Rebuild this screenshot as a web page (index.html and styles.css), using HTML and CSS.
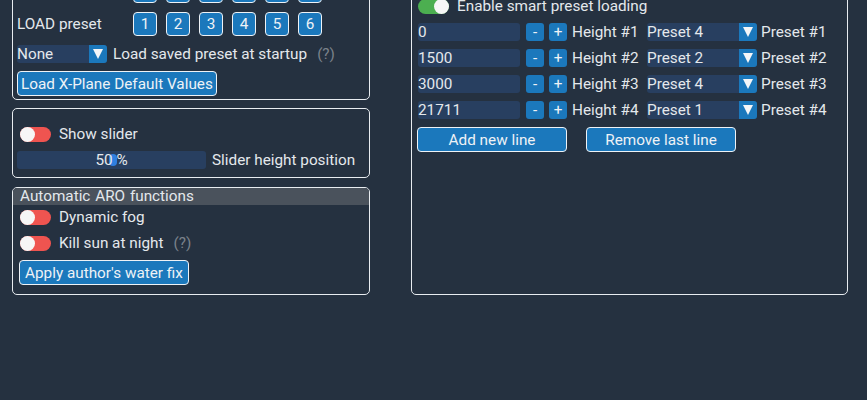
FILE: index.html
```html
<html>
<head>
<title>ARO Presets</title>
<link rel="stylesheet" href="styles.css">
</head>
<body>

<div class="screen">
  <div class="col-left">

    <div class="box presets">
      <div class="row slot-row">
        <span class="label"></span>
        <div class="slots">
          <button class="slot"></button><button class="slot"></button><button class="slot"></button>
          <button class="slot"></button><button class="slot"></button><button class="slot"></button>
        </div>
      </div>
      <div class="row slot-row">
        <span class="label">LOAD preset</span>
        <div class="slots">
          <button class="slot">1</button><button class="slot">2</button><button class="slot">3</button>
          <button class="slot">4</button><button class="slot">5</button><button class="slot">6</button>
        </div>
      </div>
      <div class="row line">
        <div class="combo combo-none"><span class="combo-text">None</span><span class="arrow"></span></div>
        <span>Load saved preset at startup</span>
        <span class="hint">(?)</span>
      </div>
      <div class="row btn-row">
        <button class="btn">Load X-Plane Default Values</button>
      </div>
    </div>

    <div class="box slider-box">
      <div class="row line">
        <span class="toggle off"></span>
        <span>Show slider</span>
      </div>
      <div class="row line gap-after">
        <div class="slider"><span class="grab"></span><span class="slider-text">50 %</span></div>
        <span>Slider height position</span>
      </div>
    </div>

    <div class="box aro">
      <div class="box-title">Automatic ARO functions</div>
      <div class="aro-body">
        <div class="row line">
          <span class="toggle off"></span>
          <span>Dynamic fog</span>
        </div>
        <div class="row line">
          <span class="toggle off"></span>
          <span>Kill sun at night</span>
          <span class="hint">(?)</span>
        </div>
        <div class="row btn-row">
          <button class="btn btn-fix">Apply author's water fix</button>
        </div>
      </div>
    </div>

  </div>

  <div class="box smart">
    <div class="row line smart-toggle">
      <span class="toggle on"></span>
      <span>Enable smart preset loading</span>
    </div>

    <div class="row line height-row">
      <div class="input">0</div>
      <button class="step">-</button><button class="step">+</button>
      <span class="h-label">Height #1</span>
      <div class="combo combo-preset"><span class="combo-text">Preset 4</span><span class="arrow"></span></div>
      <span>Preset #1</span>
    </div>
    <div class="row line height-row">
      <div class="input">1500</div>
      <button class="step">-</button><button class="step">+</button>
      <span class="h-label">Height #2</span>
      <div class="combo combo-preset"><span class="combo-text">Preset 2</span><span class="arrow"></span></div>
      <span>Preset #2</span>
    </div>
    <div class="row line height-row">
      <div class="input">3000</div>
      <button class="step">-</button><button class="step">+</button>
      <span class="h-label">Height #3</span>
      <div class="combo combo-preset"><span class="combo-text">Preset 4</span><span class="arrow"></span></div>
      <span>Preset #3</span>
    </div>
    <div class="row line height-row">
      <div class="input">21711</div>
      <button class="step">-</button><button class="step">+</button>
      <span class="h-label">Height #4</span>
      <div class="combo combo-preset"><span class="combo-text">Preset 1</span><span class="arrow"></span></div>
      <span>Preset #4</span>
    </div>

    <div class="row line-btns">
      <button class="btn wide">Add new line</button>
      <button class="btn wide">Remove last line</button>
    </div>
  </div>
</div>

</body>
</html>
```

FILE: styles.css
```css
body {
  margin:0;
  background:#253140;
  color:#e4e8ec;
  font-family:Roboto, "Liberation Sans", sans-serif;
  font-size:15.3px;
  overflow:hidden;
}

button {
  font-family:inherit;
  font-size:15.3px;
  color:#eef2f6;
  cursor:pointer;
}

.screen {
  display:flex;
  align-items:stretch;
  gap:41px;
  padding-left:12px;
  margin-top:-26px;
}

.col-left {
  width:358px;
  display:flex;
  flex-direction:column;
  gap:8px;
}

.box {
  border:1px solid #e8ecf0;
  border-radius:5px;
  box-sizing:border-box;
}

.row {
  display:flex;
  align-items:center;
}

.line {
  height:18px;
  gap:6px;
}

/* presets box */
.presets {
  padding:4px 4px 3px 4px;
}

.slot-row {
  height:24px;
  margin-bottom:9px;
}

.slot-row .label {
  width:116px;
}

.slots {
  display:flex;
  gap:9px;
}

.slot {
  width:24px;
  height:24px;
  padding:0;
  background:#1b78bc;
  border:1.5px solid #eef2f6;
  border-radius:4px;
  line-height:20px;
}

.btn-row {
  margin-top:8px;
}

.btn {
  height:25px;
  padding:0 3px;
  background:#1b78bc;
  border:1.5px solid #eef2f6;
  border-radius:4px;
  line-height:20px;
}

.btn-fix {
  padding:0 5px;
}

.hint {
  color:#7b828b;
  margin-left:4px;
}

/* combos */
.combo {
  display:flex;
  height:18px;
  background:#283f60;
  border-radius:3px;
}

.combo-text {
  flex:1;
  line-height:18px;
}

.combo .arrow {
  width:18px;
  height:18px;
  background:#1b78bc;
  border-radius:0 3px 3px 0;
  position:relative;
}

.combo .arrow:after {
  content:"";
  position:absolute;
  left:4px;
  top:4px;
  border-left:5px solid transparent;
  border-right:5px solid transparent;
  border-top:10px solid #f4f6f8;
}

.combo-none {
  width:90px;
}

.combo-preset {
  width:110px;
  margin-right:-1px;
}

/* toggles */
.toggle {
  width:31px;
  height:15px;
  border-radius:8px;
  margin:0 2px 0 3px;
  position:relative;
  flex:none;
}

.toggle:after {
  content:"";
  position:absolute;
  top:0;
  width:15px;
  height:15px;
  border-radius:50%;
  background:#f6f6f6;
}

.toggle.off {
  background:#ef5450;
}

.toggle.off:after {
  left:0;
}

.toggle.on {
  background:#4caf50;
}

.toggle.on:after {
  right:0;
}

/* slider box */
.slider-box {
  padding:16px 4px 8px 4px;
}

.gap-after {
  margin-top:8px;
}

.slider {
  width:189px;
  height:18px;
  background:#283f60;
  border-radius:3px;
  position:relative;
  text-align:center;
  line-height:18px;
}

.grab {
  position:absolute;
  left:92px;
  top:3px;
  width:8px;
  height:12px;
  border-radius:4px;
  background:#2f7fe0;
}

.slider-text {
  position:relative;
}

/* aro box */
.aro {
  margin-top:1px;
}

.box-title {
  background:#4a525c;
  height:17px;
  line-height:17px;
  padding-left:7px;
  word-spacing:1px;
  border-radius:4px 4px 0 0;
}

.aro-body {
  padding:3px 6px 9px 6px;
}

.aro-body .line {
  margin-top:8px;
}

.aro-body .line:first-child {
  margin-top:0;
}

.aro-body .toggle {
  margin-left:1px;
}

/* smart preset loading */
.smart {
  width:437px;
  padding:22px 6px 0 6px;
}

.smart-toggle .toggle {
  margin-left:0;
}

.height-row {
  margin-top:8px;
  gap:5px;
}

.input {
  width:102px;
  height:18px;
  line-height:18px;
  background:#283f60;
  border-radius:3px;
  margin-right:1px;
}

.step {
  width:18px;
  height:18px;
  padding:0;
  background:#1b78bc;
  border:none;
  border-radius:3px;
  line-height:18px;
}

.h-label {
  width:70px;
}

.line-btns {
  margin-top:8px;
  gap:20px;
}

.btn.wide {
  width:150px;
  margin-left:-1px;
}
```
